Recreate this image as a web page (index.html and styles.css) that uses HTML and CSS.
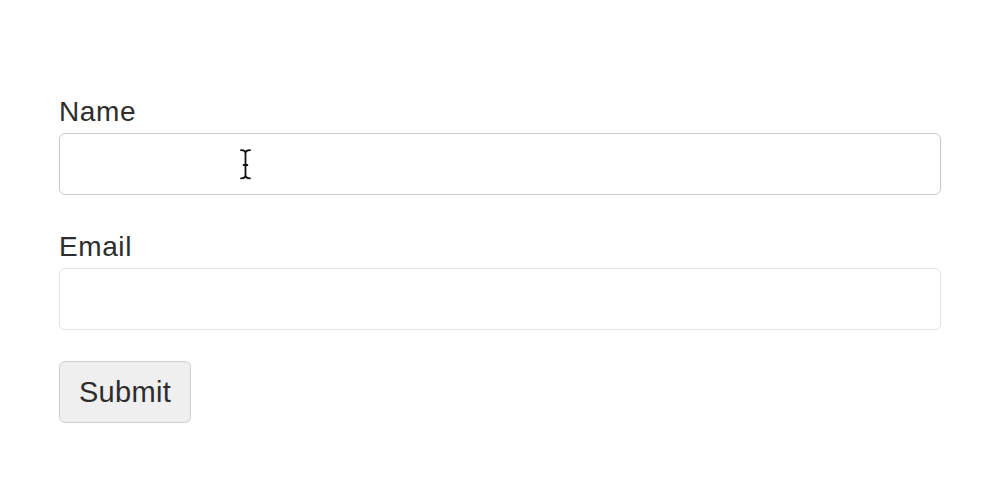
FILE: index.html
```html
<!DOCTYPE html>
<html lang="en">
<head>
<meta charset="utf-8">
<title>Form</title>
<link rel="stylesheet" href="styles.css">
</head>
<body>
<form class="form">
  <label class="label" for="name">Name</label>
  <div class="field">
    <input class="input input-active" id="name" type="text">
    <svg class="ibeam" width="11" height="31" viewBox="0 0 11 31" aria-hidden="true">
      <path d="M1 1.2 Q5.5 1.2 5.5 4.5 Q5.5 1.2 10 1.2 M5.5 4.5 V26 M1 29.3 Q5.5 29.3 5.5 26 Q5.5 29.3 10 29.3 M3.6 16 H7.4" fill="none" stroke="#111" stroke-width="1.8" stroke-linecap="round"/>
    </svg>
  </div>
  <label class="label label-gap" for="email">Email</label>
  <div class="field">
    <input class="input input-faded" id="email" type="email">
  </div>
  <div class="actions">
    <button class="button" type="button">Submit</button>
  </div>
</form>
</body>
</html>
```

FILE: styles.css
```css
html, body {
  margin: 0;
  padding: 0;
  background: #ffffff;
}

body {
  font-family: "Liberation Sans", Arial, sans-serif;
  color: #2d2d2d;
}

.form {
  display: flex;
  flex-direction: column;
  padding: 95px 59px 0 59px;
}

.label {
  display: block;
  font-size: 28px;
  line-height: 34px;
  letter-spacing: 0.6px;
  margin-bottom: 4px;
  color: #2d2d2d;
}

.label-gap {
  margin-top: 35px;
}

.field {
  position: relative;
}

.input {
  display: block;
  box-sizing: border-box;
  width: 100%;
  height: 62px;
  margin: 0;
  padding: 0 16px;
  border-radius: 6px;
  background: #ffffff;
  font-family: inherit;
  font-size: 24px;
  outline: none;
}

.input-active {
  border: 1px solid #c9c9cc;
}

.input-faded {
  border: 1px solid #e2e2e4;
}

.ibeam {
  position: absolute;
  left: 181px;
  top: 16px;
}

.actions {
  margin-top: 31px;
}

.button {
  box-sizing: border-box;
  width: 132px;
  height: 62px;
  margin: 0;
  padding: 0;
  border: 1px solid #cfcfd2;
  border-radius: 6px;
  background: #efeff0;
  color: #2d2d2d;
  font-family: inherit;
  font-size: 29px;
  letter-spacing: 0.3px;
  line-height: 1;
}
```
